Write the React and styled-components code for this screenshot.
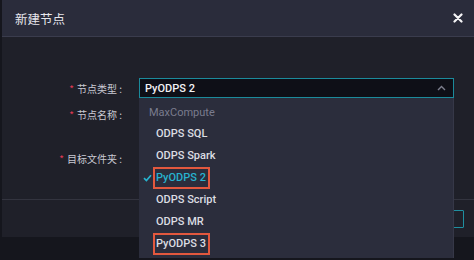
import React from "react";
import styled, { createGlobalStyle } from "styled-components";

const Global = createGlobalStyle`
  html, body { margin: 0; padding: 0; background: #15161d; }
  body { font-family: "Noto Sans CJK SC", "Noto Sans", sans-serif; width: 474px; height: 260px; overflow: hidden; }
  * { box-sizing: border-box; }
`;

const Page = styled.div`
  width: 474px;
  height: 260px;
  padding-left: 2px;
`;

const Dialog = styled.div`
  position: relative;
  width: 472px;
  height: 237px;
  background: #1f2029;
  display: flex;
  flex-direction: column;
`;

const Header = styled.div`
  height: 37px;
  flex: none;
  background: #2a2c3b;
  border-bottom: 1px solid #3a3c4d;
  display: flex;
  align-items: center;
  justify-content: space-between;
  padding: 0 11px 0 13px;
`;

const Title = styled.div`
  color: #e6e6ec;
  font-size: 12.5px;
  font-family: "Noto Sans CJK SC", sans-serif;
`;

const Close = styled.div`
  width: 11px;
  height: 11px;
  display: flex;
  align-items: center;
  justify-content: center;
`;

const Body = styled.div`
  flex: 1;
  padding-top: 41px;
  display: flex;
  flex-direction: column;
`;

const Row = styled.div`
  display: flex;
  align-items: center;
  height: ${(p) => p.$h}px;
`;

const Label = styled.div`
  width: 137px;
  padding-right: 17px;
  text-align: right;
  color: #c9cad3;
  font-size: 10px;
  font-family: "Noto Sans CJK SC", sans-serif;
  white-space: nowrap;
`;

const Star = styled.span`
  color: #e23a55;
  margin-right: 3px;
`;

const SelectBox = styled.div`
  width: 315px;
  height: 20px;
  background: #0e0f17;
  border: 1.5px solid #1b8a9b;
  display: flex;
  align-items: center;
  justify-content: space-between;
  padding: 0 7px 0 5px;
  color: #f2f2f5;
  font-family: "Roboto", sans-serif;
  font-weight: 500;
  font-size: 11px;
`;

const Footer = styled.div`
  height: 38px;
  flex: none;
  border-top: 1px solid #33343f;
  display: flex;
  align-items: center;
  justify-content: flex-end;
  padding-right: 10px;
`;

const Button = styled.div`
  width: 50px;
  height: 18px;
  border: 1.5px solid #1f8fa0;
  border-radius: 1px;
`;

const Menu = styled.div`
  position: absolute;
  left: 137px;
  top: 98px;
  width: 315px;
  height: 160px;
  background: #2b2d3c;
  border-right: 1px solid #363848;
  padding-top: 3px;
  font-family: "Roboto", sans-serif;
  font-size: 11px;
  font-weight: 500;
`;

const Group = styled.div`
  height: 22px;
  display: flex;
  align-items: center;
  padding-left: 10px;
  color: #7a7c8e;
  font-weight: 400;
`;

const Item = styled.div`
  height: 22px;
  display: flex;
  align-items: center;
  padding-left: 16px;
  position: relative;
  color: ${(p) => (p.$active ? "#27b3cf" : "#dcdde3")};
`;

const Check = styled.svg`
  position: absolute;
  left: 4px;
  top: 7px;
`;

const Mark = styled.span`
  outline: ${(p) => (p.$boxed ? "2px solid #e2583e" : "none")};
  outline-offset: 0;
  padding: 2px 2px 2px 1px;
  line-height: 14px;
`;

const items = [
  { t: "ODPS SQL" },
  { t: "ODPS Spark" },
  { t: "PyODPS 2", active: true, boxed: true },
  { t: "ODPS Script" },
  { t: "ODPS MR" },
  { t: "PyODPS 3", boxed: true },
];

export default function App() {
  return (
    <>
      <Global />
      <Page>
        <Dialog>
          <Header>
            <Title>新建节点</Title>
            <Close>
              <svg width="10" height="10" viewBox="0 0 10 10">
                <path d="M1.5 1.5 L8.5 8.5 M8.5 1.5 L1.5 8.5" stroke="#f4f4f6" strokeWidth="2.2" strokeLinecap="round" />
              </svg>
            </Close>
          </Header>
          <Body>
            <Row $h={20}>
              <Label><Star>*</Star>节点类型 :</Label>
              <SelectBox>
                <span>PyODPS 2</span>
                <svg width="9" height="6" viewBox="0 0 9 6">
                  <path d="M1 5 L4.5 1.5 L8 5" stroke="#7d7f8e" strokeWidth="1.4" fill="none" />
                </svg>
              </SelectBox>
            </Row>
            <Row $h={32}>
              <Label><Star>*</Star>节点名称 :</Label>
            </Row>
            <Row $h={56}>
              <Label><Star>*</Star>目标文件夹 :</Label>
            </Row>
          </Body>
          <Footer>
            <Button />
          </Footer>
          <Menu>
            <Group>MaxCompute</Group>
            {items.map((it) => (
              <Item key={it.t} $active={it.active}>
                {it.active && (
                  <Check width="9" height="8" viewBox="0 0 9 8">
                    <path d="M1 4.2 L3.4 6.5 L8 1.2" stroke="#27b3cf" strokeWidth="1.7" fill="none" />
                  </Check>
                )}
                <Mark $boxed={it.boxed}>{it.t}</Mark>
              </Item>
            ))}
          </Menu>
        </Dialog>
      </Page>
    </>
  );
}
